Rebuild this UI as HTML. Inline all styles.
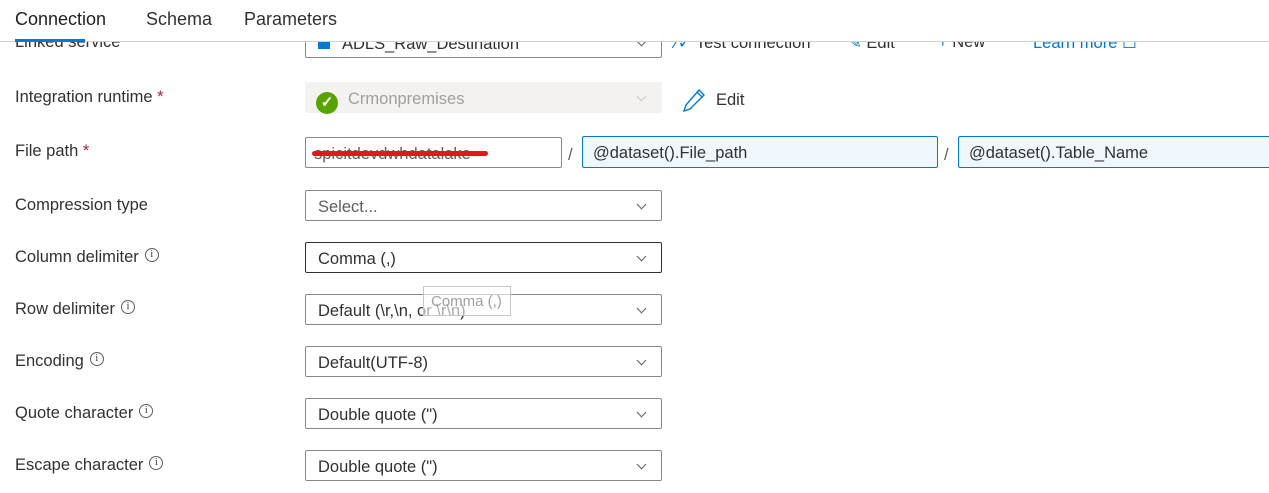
<!DOCTYPE html>
<html><head><meta charset="utf-8"><style>
*{box-sizing:border-box;margin:0;padding:0}
body{width:1269px;height:493px;overflow:hidden;background:#fff;font-family:"Liberation Sans",sans-serif;color:#323130;font-size:16.5px;position:relative}
.a{position:absolute;white-space:nowrap}
.lbl{left:15px}
.box{position:absolute;left:305px;width:357px;height:31px;border:1px solid #8a8886;border-radius:2px;padding-left:12px;line-height:32px;font-size:16.5px}
.chev{position:absolute;right:16px;top:10px;width:7px;height:7px;border-right:1px solid #605e5c;border-bottom:1px solid #605e5c;transform:rotate(45deg)}
.info{display:inline-block;width:14px;height:14px;border:1px solid #605e5c;border-radius:50%;font-size:10px;line-height:12px;text-align:center;vertical-align:5px;margin-left:6px;font-family:"Liberation Serif",serif}
.req{color:#a4262c}
.blue{position:absolute;height:32px;border:1px solid #0078d4;background:#eff6fc;border-radius:2px;padding-left:10px;line-height:33px}
</style></head><body>
<div class="a" style="left:0;top:0;width:1269px;height:42px;background:#fff;border-bottom:1px solid #d2d0ce;z-index:5"></div>
<div class="a" style="left:15px;top:9px;font-size:18px;color:#201f1e;z-index:6">Connection</div>
<div class="a" style="left:15px;top:39px;width:70px;height:3px;background:#0078d4;z-index:6"></div>
<div class="a" style="left:146px;top:9px;font-size:18px;z-index:6">Schema</div>
<div class="a" style="left:244px;top:9px;font-size:18px;z-index:6">Parameters</div>
<div class="a lbl" style="top:33px">Linked service</div>
<div class="box" style="top:27px"><span style="display:inline-block;width:12px;height:10px;background:#0078d4;margin-right:12px"></span>ADLS_Raw_Destination<div class="chev"></div></div>
<div class="a" style="left:675px;top:33px;color:#323130"><span style="color:#0078d4">⁄✓</span> Test connection</div>
<div class="a" style="left:848px;top:33px"><span style="color:#0078d4">✎</span> Edit</div>
<div class="a" style="left:938px;top:33px"><span style="color:#0078d4">+</span> New</div>
<div class="a" style="left:1033px;top:33px;color:#0078d4">Learn more ☐</div>

<div class="a lbl" style="top:88px">Integration runtime <span class="req">*</span></div>
<div class="box" style="top:82px;border-color:#f3f2f1;background:#f3f2f1;color:#a19f9d;padding-left:10px"><span style="display:inline-block;width:22px;height:22px;border-radius:50%;background:#57a300;color:#fff;text-align:center;line-height:22px;font-size:15px;font-weight:bold;vertical-align:-3px;margin-right:10px">✓</span>Crmonpremises<div class="chev" style="border-color:#c8c6c4"></div></div>
<svg class="a" style="left:682px;top:88px" width="24" height="24" viewBox="0 0 24 24"><path d="M17 2l5 5L8 21l-6 2 2-6z M15 4l5 5" fill="none" stroke="#0078d4" stroke-width="1.4"/></svg>
<div class="a" style="left:716px;top:91px">Edit</div>

<div class="a lbl" style="top:142px">File path <span class="req">*</span></div>
<div class="box" style="top:137px;width:257px;padding-left:8px;color:#605e5c">spicitdevdwhdatalake<div class="a" style="left:6px;top:13px;width:176px;height:5px;background:#e0191c;border-radius:3px"></div></div>
<div class="a" style="left:568px;top:146px;color:#605e5c">/</div>
<div class="blue" style="left:582px;top:136px;width:356px">@dataset().File_path</div>
<div class="a" style="left:944px;top:146px;color:#605e5c">/</div>
<div class="blue" style="left:958px;top:136px;width:320px">@dataset().Table_Name</div>

<div class="a lbl" style="top:196px">Compression type</div>
<div class="box" style="top:190px;color:#605e5c">Select...<div class="chev"></div></div>

<div class="a lbl" style="top:248px">Column delimiter<span class="info">i</span></div>
<div class="box" style="top:242px;border-color:#323130">Comma (,)<div class="chev"></div></div>

<div class="a lbl" style="top:300px">Row delimiter<span class="info">i</span></div>
<div class="box" style="top:294px">Default (\r,\n, or \r\n)<div class="chev"></div></div>
<div class="a" style="left:423px;top:286px;width:88px;height:30px;border:1px solid #c8c6c4;background:rgba(255,255,255,.6);color:#a19f9d;font-size:15px;padding:6px 0 0 7px">Comma (,)</div>

<div class="a lbl" style="top:352px">Encoding<span class="info">i</span></div>
<div class="box" style="top:346px">Default(UTF-8)<div class="chev"></div></div>

<div class="a lbl" style="top:404px">Quote character<span class="info">i</span></div>
<div class="box" style="top:398px">Double quote (")<div class="chev"></div></div>

<div class="a lbl" style="top:456px">Escape character<span class="info">i</span></div>
<div class="box" style="top:450px">Double quote (")<div class="chev"></div></div>
</body></html>
